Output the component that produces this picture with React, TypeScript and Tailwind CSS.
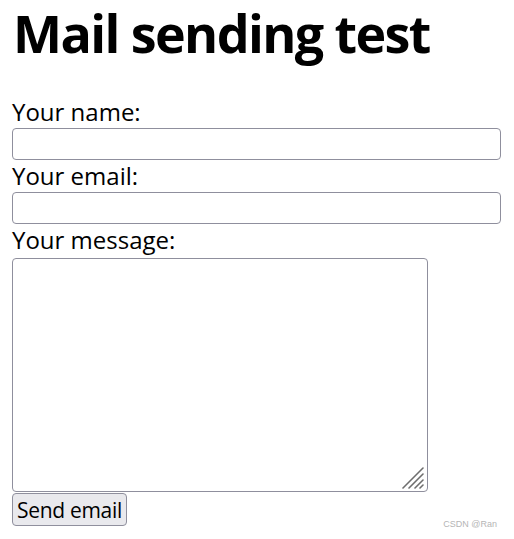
export default function App() {
  const font = { fontFamily: '"Open Sans", "Noto Sans", sans-serif' };
  return (
    <div className="relative h-[539px] w-[514px] bg-white px-3 text-black" style={font}>
      <h1 className="pl-[1px] text-[52px] font-bold leading-[66px] tracking-[-1.6px]">Mail sending test</h1>

      <form className="mt-[30px] flex flex-col items-start text-[24px] leading-8" onSubmit={(e) => e.preventDefault()}>
        <label htmlFor="name">Your name:</label>
        <input id="name" type="text" className="h-8 w-[489px] rounded-[4px] border border-[#8f8f9d] bg-white px-1 text-base" />

        <label htmlFor="email">Your email:</label>
        <input id="email" type="email" className="h-8 w-[489px] rounded-[4px] border border-[#8f8f9d] bg-white px-1 text-base" />

        <label htmlFor="message">Your message:</label>
        <div className="relative mt-[2px]">
          <textarea
            id="message"
            className="block h-[234px] w-[416px] resize-none rounded-[4px] border border-[#8f8f9d] bg-white p-1 text-base"
          />
          {/* resize grip */}
          <svg className="pointer-events-none absolute bottom-[3px] right-[4px]" width="22" height="22" viewBox="0 0 22 22">
            <g stroke="#6e6e6e" strokeWidth="1.6" strokeLinecap="round">
              <line x1="1" y1="21" x2="21" y2="1" />
              <line x1="7" y1="21" x2="21" y2="7" />
              <line x1="13" y1="21" x2="21" y2="13" />
              <line x1="18" y1="21" x2="21" y2="18" />
            </g>
          </svg>
        </div>

        <button
          type="submit"
          className="mt-px flex h-[33px] w-[115px] items-center justify-center rounded-[4px] border border-[#8f8f9d] bg-[#e9e9ed] text-[21px] leading-7 tracking-[-0.3px]"
        >
          Send email
        </button>
      </form>

      <div className="absolute bottom-[8px] right-[17px] text-[9px] text-[#b5b5b5]" style={{ fontFamily: '"Liberation Sans", Arial, sans-serif' }}>
        CSDN @Ran
      </div>
    </div>
  );
}
